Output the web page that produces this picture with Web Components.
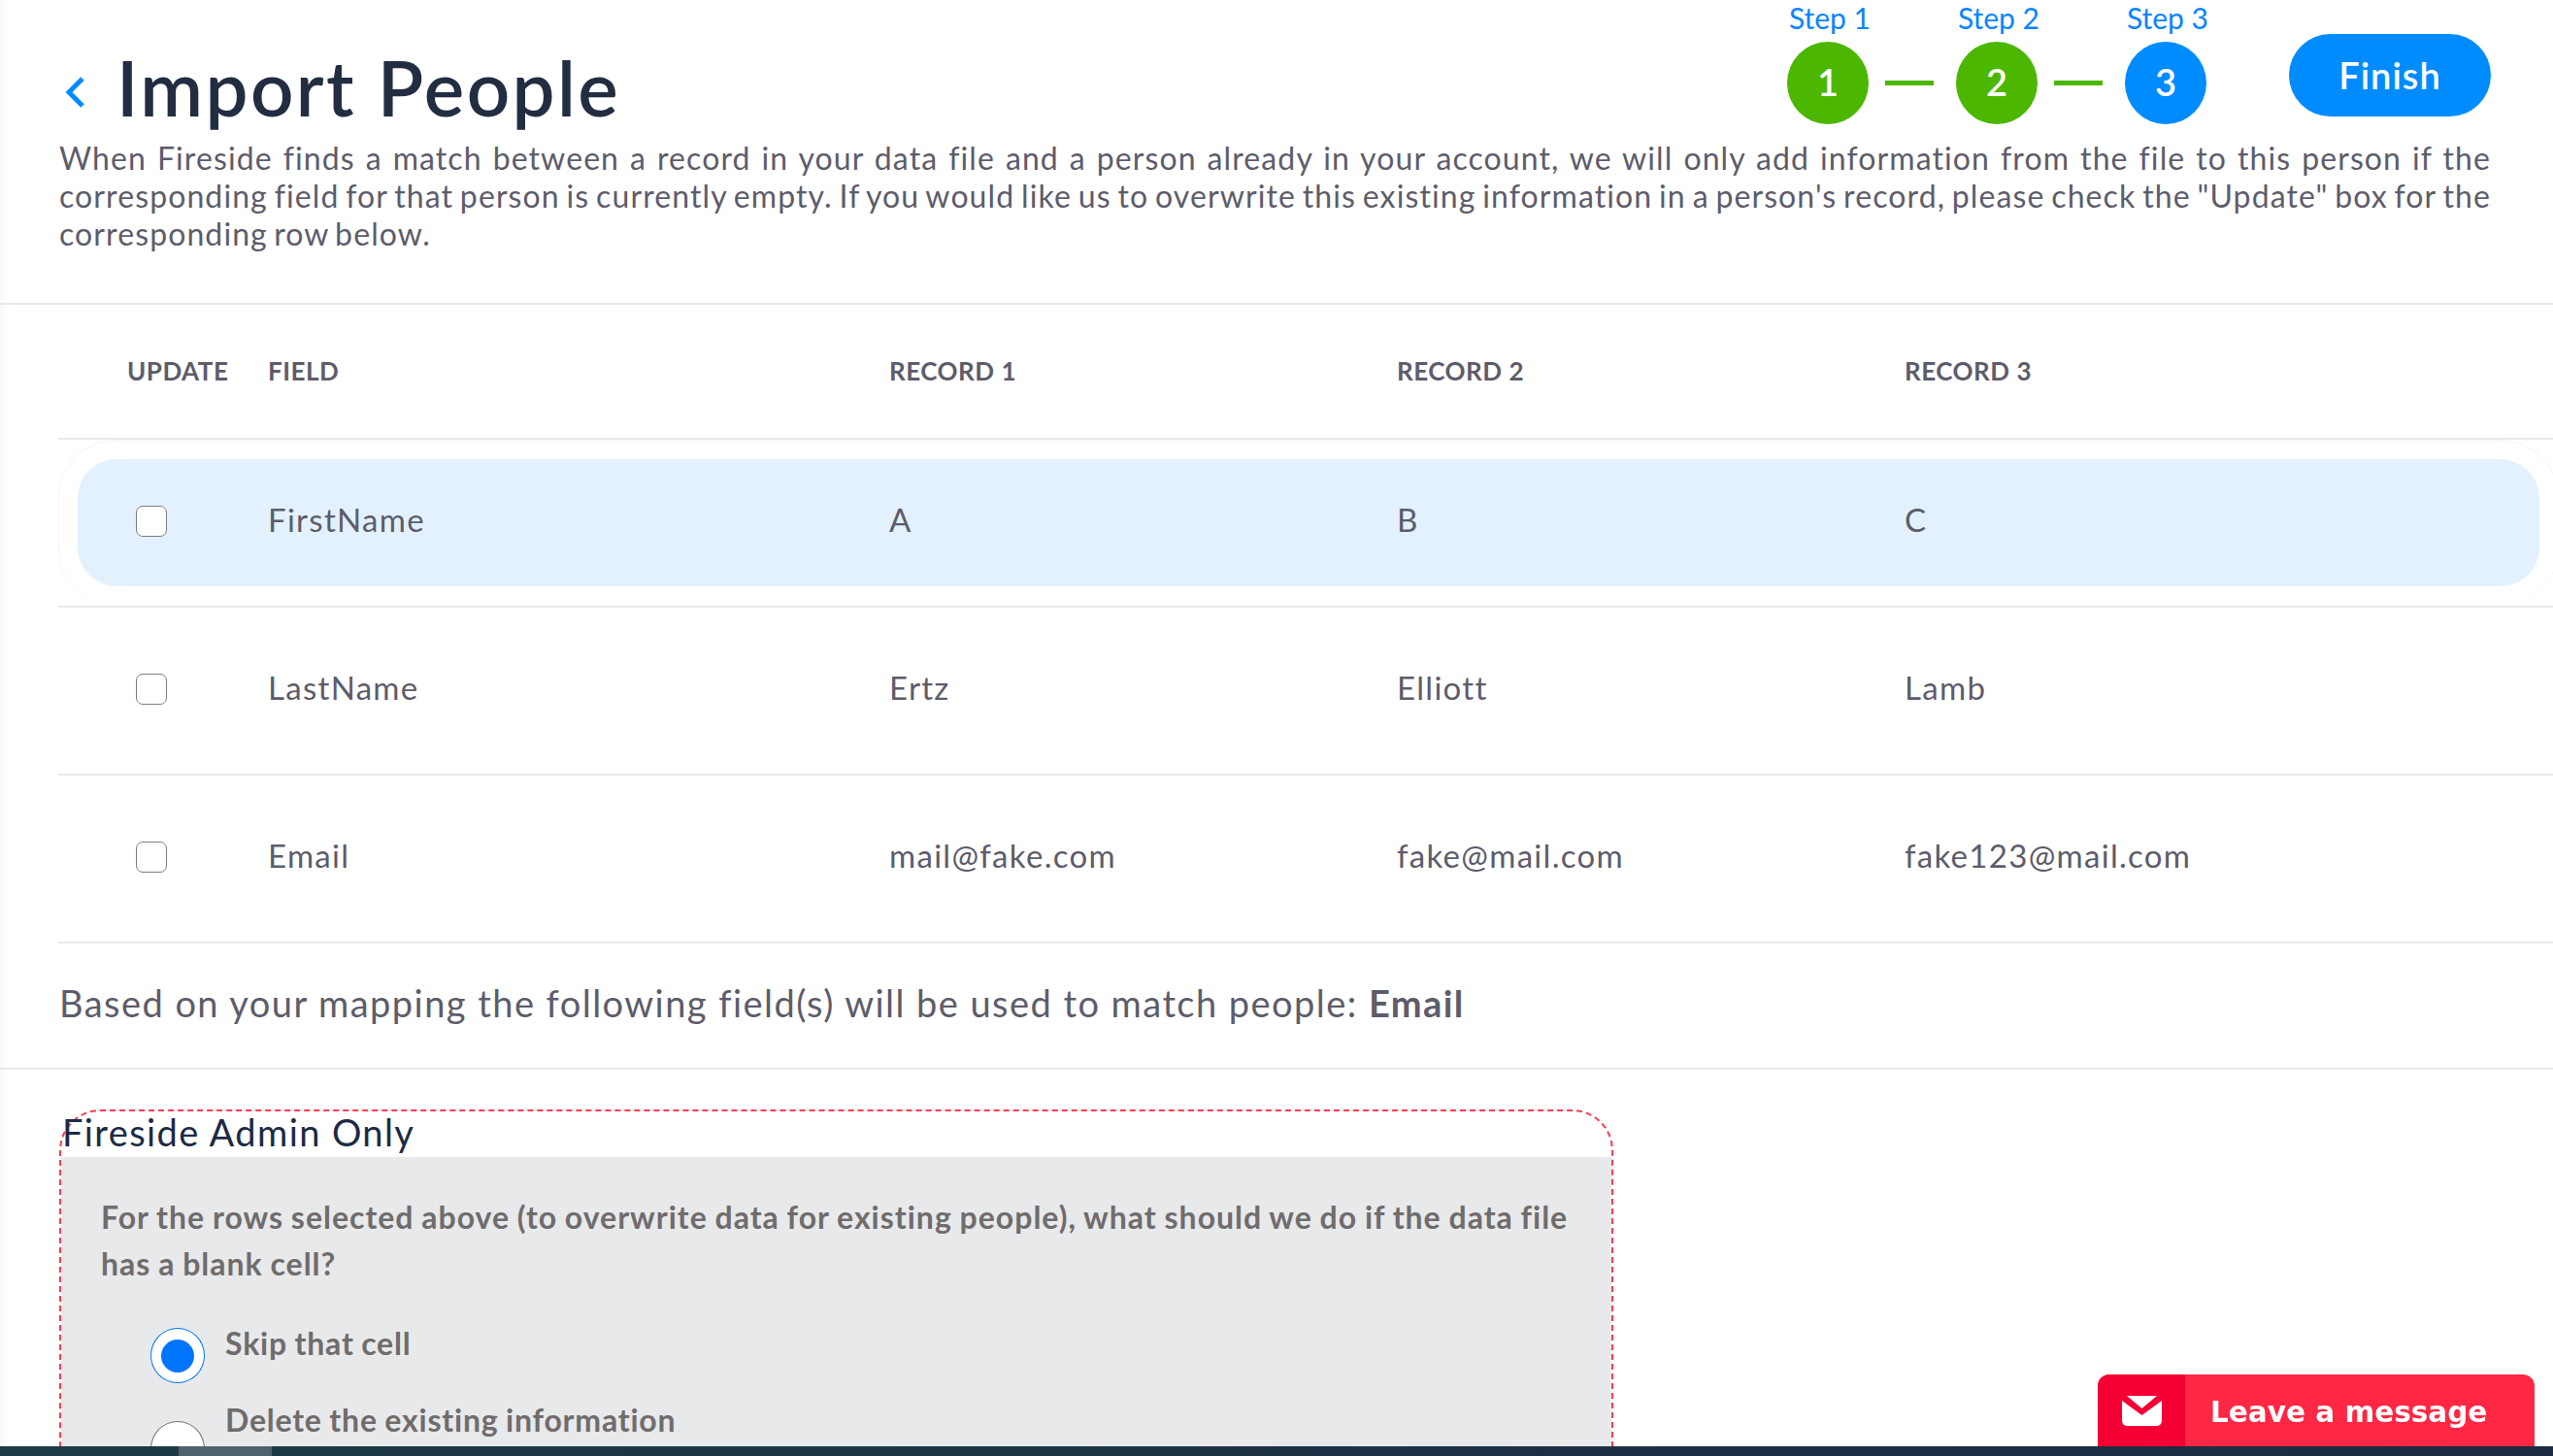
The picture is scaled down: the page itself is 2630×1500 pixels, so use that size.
<!DOCTYPE html>
<html>
<head>
<meta charset="utf-8">
<title>Import People</title>
<style>
  html, body { margin: 0; padding: 0; height: 1500px; overflow: hidden; background: #fff; }
  body { font-family: "Lato", "Liberation Sans", sans-serif; }
</style>
</head>
<body>
<import-page>
  <import-header></import-header>
  <p slot="intro">When Fireside finds a match between a record in your data file and a person already in your account, we will only add information from the file to this person if the corresponding field for that person is currently empty. If you would like us to overwrite this existing information in a person's record, please check the "Update" box for the corresponding row below.</p>
  <field-table slot="table">
    <field-row head values="FIELD|RECORD 1|RECORD 2|RECORD 3"></field-row>
    <field-row active values="FirstName|A|B|C"></field-row>
    <field-row values="LastName|Ertz|Elliott|Lamb"></field-row>
    <field-row values="Email|mail@fake.com|fake@mail.com|fake123@mail.com"></field-row>
  </field-table>
  <span slot="match">Based on your mapping the following field(s) will be used to match people: <b>Email</b></span>
  <admin-panel slot="admin" heading="Fireside Admin Only">
    <span slot="question">For the rows selected above (to overwrite data for existing people), what should we do if the data file has a blank cell?</span>
    <radio-option checked>Skip that cell</radio-option>
    <radio-option>Delete the existing information</radio-option>
  </admin-panel>
</import-page>
<chat-widget></chat-widget>

<script>
class ImportPage extends HTMLElement {
  constructor() {
    super();
    this.attachShadow({ mode: "open" }).innerHTML = `
      <style>
        :host {
          display: block;
          height: 1500px;
          overflow: hidden;
          background: linear-gradient(90deg, #f8f9f9, #fff 10px);
        }
        .intro {
          padding: 0 64px 0 61px;
          height: 169px;
          font-size: 32px;
          line-height: 39px;
          letter-spacing: 1.1px;
          word-spacing: -3px;
          color: #5d5c6b;
          text-align: justify;
        }
        ::slotted(p) { margin: -1px 0 0; }
        .divider { border-bottom: 2px solid #e9e9e9; }
        .match {
          display: flex;
          align-items: center;
          box-sizing: border-box;
          height: 130px;
          padding: 0 0 6px 61px;
          font-size: 38px;
          letter-spacing: 1.45px;
          color: #5d5c6b;
          border-bottom: 2px solid #e9e9e9;
        }
        .admin { padding: 41px 0 0 61px; }
      </style>
      <slot></slot>
      <div class="intro divider"><slot name="intro"></slot></div>
      <slot name="table"></slot>
      <div class="match"><slot name="match"></slot></div>
      <div class="admin"><slot name="admin"></slot></div>
    `;
  }
}

class ImportHeader extends HTMLElement {
  constructor() {
    super();
    this.attachShadow({ mode: "open" }).innerHTML = `
      <style>
        :host {
          display: flex;
          justify-content: space-between;
          height: 144px;
          padding: 0 64px 0 68px;
        }
        .title { display: flex; align-items: center; gap: 33px; height: 180px; }
        .title svg { width: 19px; height: 32px; display: block; margin-top: 10px; }
        h1 { margin: 0; font-size: 78px; font-weight: 600; letter-spacing: 2.4px; color: #232d42; line-height: 1; }
        .steps { display: flex; align-items: flex-start; }
        .step { width: 84px; }
        .step span {
          display: block;
          height: 43px;
          padding-left: 2px;
          font-size: 30px;
          line-height: 36px;
          color: #0a84ff;
          white-space: nowrap;
        }
        .dot {
          width: 84px;
          height: 85px;
          border-radius: 50%;
          display: flex;
          align-items: center;
          justify-content: center;
          color: #fff;
          font-size: 38px;
          font-weight: 600;
          padding-bottom: 3px;
          box-sizing: border-box;
          background: #4cb700;
        }
        .dot.current { background: #008cff; }
        .line { width: 50px; height: 5px; margin: 83px 23px 0 17px; background: #4cb700; }
        button {
          width: 208px;
          height: 85px;
          margin: 35px 0 0 85px;
          padding: 0 0 2px;
          border: none;
          border-radius: 43px;
          background: #008cff;
          color: #fff;
          font: 600 38px "Lato", sans-serif;
          letter-spacing: 1px;
        }
      </style>
      <div class="title">
        <svg viewBox="0 0 19 32"><path d="M17 2 L3 16 L17 30" fill="none" stroke="#008cff" stroke-width="5"/></svg>
        <h1>Import People</h1>
      </div>
      <div class="steps">
        <div class="step"><span>Step 1</span><div class="dot">1</div></div>
        <div class="line"></div>
        <div class="step"><span>Step 2</span><div class="dot">2</div></div>
        <div class="line"></div>
        <div class="step"><span>Step 3</span><div class="dot current">3</div></div>
        <button>Finish</button>
      </div>
    `;
  }
}

class FieldTable extends HTMLElement {
  constructor() {
    super();
    this.attachShadow({ mode: "open" }).innerHTML = `
      <style>
        :host { display: block; margin-left: 60px; }
      </style>
      <slot></slot>
    `;
  }
}

class FieldRow extends HTMLElement {
  constructor() {
    super();
    const head = this.hasAttribute("head");
    const cells = this.getAttribute("values").split("|");
    const first = head
      ? `<div class="update">UPDATE</div>`
      : `<div class="update"><i class="check"></i></div>`;
    this.attachShadow({ mode: "open" }).innerHTML = `
      <style>
        :host {
          display: block;
          position: relative;
          padding: 20px 14px 0 20px;
          height: 151px;
          border-bottom: 2px solid #e9e9e9;
          color: #5d5c6b;
          font-size: 33px;
          letter-spacing: 1.3px;
        }
        :host([head]) { height: 117px; font-size: 26px; font-weight: 700; letter-spacing: 0.5px; }
        /* faint focus ring the reference leaves around the highlighted row */
        :host([active])::before {
          content: "";
          position: absolute;
          inset: 0 -6px 0 0;
          border: 1px solid #f1f7fd;
          border-bottom: none;
          border-radius: 60px;
          pointer-events: none;
        }
        .grid {
          display: grid;
          grid-template-columns: 196px 640px 523px 523px 1fr;
          align-items: center;
          height: 131px;
          border-radius: 40px;
        }
        .grid > div { padding-bottom: 8px; }
        .grid > .update { padding-bottom: 4px; }
        :host([head]) .grid { height: 96px; }
        :host([head]) .grid > div { padding-bottom: 0; }
        :host([active]) .grid { background: #e3f1ff; }
        .update { padding-left: 51px; white-space: nowrap; }
        .check {
          display: block;
          width: 32px;
          height: 32px;
          margin-left: 9px;
          box-sizing: border-box;
          border: 1px solid #7d7d7d;
          border-radius: 7px;
          background: #fff;
        }
      </style>
      <div class="grid">
        ${first}
        ${cells.map((c) => `<div>${c}</div>`).join("")}
      </div>
    `;
  }
}

class AdminPanel extends HTMLElement {
  constructor() {
    super();
    this.attachShadow({ mode: "open" }).innerHTML = `
      <style>
        :host {
          display: block;
          width: 1601px;
          height: 500px;
          box-sizing: border-box;
          border: 2px dashed #ff3a50;
          border-radius: 42px;
        }
        h2 {
          margin: 0 0 0 1px;
          height: 47px;
          font-size: 38px;
          font-weight: 400;
          letter-spacing: 1.4px;
          line-height: 42px;
          color: #1c2a44;
        }
        .body {
          padding: 38px 32px 0 41px;
          height: 400px;
          background: #e8e9eb;
          color: #706c6c;
          font-size: 32px;
          font-weight: 700;
          letter-spacing: 0.8px;
          word-spacing: -1px;
        }
        .question { line-height: 48px; margin-bottom: 32px; letter-spacing: 1px; }
        .options { padding-left: 51px; display: flex; flex-direction: column; gap: 22px; }
      </style>
      <h2>${this.getAttribute("heading")}</h2>
      <div class="body">
        <div class="question"><slot name="question"></slot></div>
        <div class="options"><slot></slot></div>
      </div>
    `;
  }
}

class RadioOption extends HTMLElement {
  constructor() {
    super();
    this.attachShadow({ mode: "open" }).innerHTML = `
      <style>
        :host { display: flex; gap: 21px; align-items: flex-start; height: 57px; }
        .ring {
          flex: none;
          width: 56px;
          height: 57px;
          margin-top: 27px;
          box-sizing: border-box;
          border: 1px solid #767676;
          border-radius: 50%;
          background: #fff;
          display: flex;
          align-items: center;
          justify-content: center;
        }
        :host([checked]) .ring { margin-top: 10px; border: 1px solid #0075ff; }
        :host([checked]) .ring::after {
          content: "";
          width: 34px;
          height: 34px;
          border-radius: 50%;
          background: #0075ff;
        }
        .label { padding-top: 7px; line-height: 38px; }
      </style>
      <div class="ring"></div>
      <div class="label"><slot></slot></div>
    `;
  }
}

class ChatWidget extends HTMLElement {
  constructor() {
    super();
    this.attachShadow({ mode: "open" }).innerHTML = `
      <style>
        :host {
          position: fixed;
          left: 0;
          right: 0;
          bottom: 0;
          height: 10px;
          display: block;
          background: linear-gradient(90deg, #1e3a46, #1a2b42);
        }
        .thumb { position: absolute; left: 184px; top: 0; width: 96px; height: 10px; background: #4d636b; }
        .chat {
          position: absolute;
          right: 19px;
          bottom: 10px;
          width: 450px;
          height: 74px;
          display: flex;
          border-radius: 12px 12px 0 0;
          overflow: hidden;
          background: #ff2744;
          color: #fff;
          font: 700 29.5px "DejaVu Sans", sans-serif;
        }
        .icon { width: 90px; display: flex; align-items: center; justify-content: center; background: #f50035; }
        .icon svg { width: 41px; height: 31px; display: block; }
        .text { padding-left: 26px; line-height: 78px; white-space: nowrap; }
      </style>
      <div class="thumb"></div>
      <div class="chat">
        <div class="icon">
          <svg viewBox="0 0 41 31">
            <path d="M5 0 H36 L20.5 13 Z" fill="#fff"/>
            <path d="M0 5 L20.5 20 L41 5 V25 Q41 31 35 31 H6 Q0 31 0 25 Z" fill="#fff"/>
          </svg>
        </div>
        <div class="text">Leave a message</div>
      </div>
    `;
  }
}

customElements.define("import-page", ImportPage);
customElements.define("import-header", ImportHeader);
customElements.define("field-table", FieldTable);
customElements.define("field-row", FieldRow);
customElements.define("admin-panel", AdminPanel);
customElements.define("radio-option", RadioOption);
customElements.define("chat-widget", ChatWidget);
</script>
</body>
</html>
